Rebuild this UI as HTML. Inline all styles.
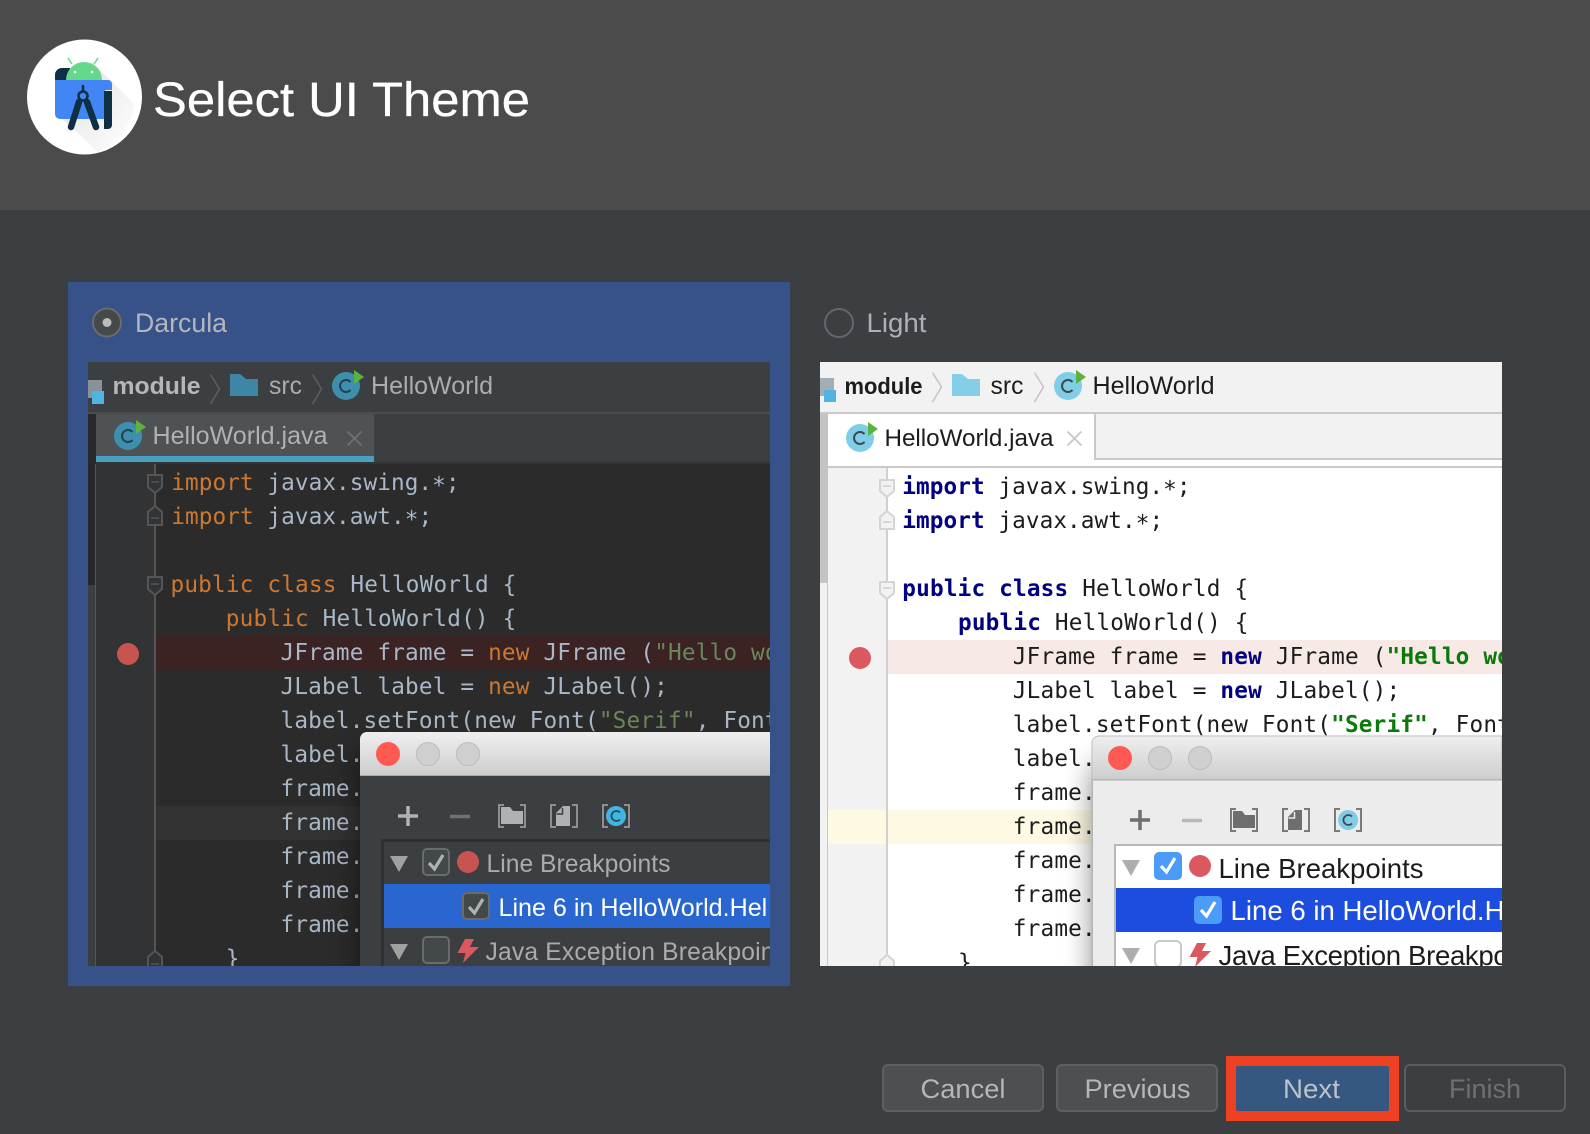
<!DOCTYPE html>
<html><head><meta charset="utf-8"><title>Select UI Theme</title>
<style>
html,body{margin:0;padding:0;background:#3c3f41}
svg{display:block}
text{white-space:pre;font-family:"Liberation Sans",sans-serif}
.m text{font-family:"DejaVu Sans Mono","Liberation Mono",monospace;font-size:22.7px;letter-spacing:.18px}
.m text.i{letter-spacing:.07px}
.dk{fill:#a9b7c6}.dk .k{fill:#cc7832}.dk .s{fill:#6a8759}
.lt{fill:#1c1c1c}.lt .k{fill:#000080;font-weight:bold}.lt .s{fill:#0a7a0a;font-weight:bold}
</style></head><body>
<svg xmlns="http://www.w3.org/2000/svg" width="1590" height="1134" viewBox="0 0 1590 1134">
<defs>
<clipPath id="cD"><rect x="88" y="362" width="682" height="604"/></clipPath>
<clipPath id="cL"><rect x="820" y="362" width="682" height="604"/></clipPath>
<linearGradient id="tb" x1="0" y1="0" x2="0" y2="1"><stop offset="0" stop-color="#efefef"/><stop offset="1" stop-color="#cdcdcd"/></linearGradient>
<filter id="sh" x="-30%" y="-30%" width="160%" height="160%"><feGaussianBlur stdDeviation="14"/></filter>
<linearGradient id="ls" x1="0" y1="0" x2="1" y2="1"><stop offset="0" stop-color="#000" stop-opacity=".13"/><stop offset="1" stop-color="#000" stop-opacity="0"/></linearGradient>
<g id="cd"><circle r="14" fill="#3e8fae"/><path d="M4.5-4A6 6 0 1 0 4.5 4" fill="none" stroke="#24404f" stroke-width="2"/><path d="M8-16L18-9 8-2z" fill="#5bb33e"/></g>
<g id="cl"><circle r="14" fill="#7fcde6"/><path d="M4.5-4A6 6 0 1 0 4.5 4" fill="none" stroke="#3b4a52" stroke-width="2"/><path d="M8-16L18-9 8-2z" fill="#5bb33e"/></g>
</defs>

<rect width="1590" height="1134" fill="#3c3f41"/>
<rect width="1590" height="210" fill="#4b4b4b"/>

<!-- logo -->
<circle cx="84.500" cy="97" r="57.500" fill="#fff"/>
<path d="M92 62L134 104A57.500 57.500 0 0 1 98 152L55 112z" fill="url(#ls)"/>
<path d="M62 68H70V84H55V75A7 7 0 0 1 62 68z" fill="#0f2f44"/>
<path d="M66 80A18 18 0 0 1 102 80z" fill="#64d98a"/>
<path d="M72 64L68 58M94 64L98 58" stroke="#64d98a" stroke-width="1.500"/>
<circle cx="75" cy="72" r="1.300" fill="#fff"/><circle cx="92" cy="72" r="1.300" fill="#fff"/>
<path d="M55 80H108A4 4 0 0 1 112 84V90H105V119H60A5 5 0 0 1 55 114z" fill="#4285f4"/>
<path d="M104 91H112V125A4 4 0 0 1 108 129H104z" fill="#0f2f44"/>
<path d="M83 85V91" stroke="#0f2f44" stroke-width="2.500"/>
<circle cx="83" cy="96" r="4.500" fill="none" stroke="#0f2f44" stroke-width="2.500"/>
<path d="M79 102L71 127M87 102L96 127" stroke="#0f2f44" stroke-width="6.500" stroke-linecap="round"/>

<text x="153" y="116" font-size="48" fill="#fff" stroke="#fff" stroke-width=".3" textLength="377" lengthAdjust="spacingAndGlyphs">Select UI Theme</text>

<!-- dark panel -->
<rect x="68" y="282" width="722" height="704" fill="#375288"/>
<circle cx="107" cy="322.500" r="14" fill="#45494a" stroke="#6b6b6b" stroke-width="2"/>
<circle cx="107" cy="322.500" r="4.500" fill="#bbb"/>
<text x="135" y="332" font-size="26.500" fill="#b4b6bb" textLength="92" lengthAdjust="spacingAndGlyphs">Darcula</text>

<g clip-path="url(#cD)">
<rect x="88" y="362" width="682" height="604" fill="#3c3f41"/>
<rect x="88" y="412" width="682" height="2" fill="#4a4c4e"/>
<rect x="88" y="414" width="8" height="171" fill="#26282a"/>
<rect x="95" y="464" width="1" height="502" fill="#555"/>
<rect x="96" y="414" width="278" height="42" fill="#4e5254"/>
<rect x="96" y="456" width="278" height="6" fill="#4a9fbf"/>
<rect x="96" y="462" width="674" height="2" fill="#323436"/>
<rect x="96" y="464" width="60" height="502" fill="#313335"/>
<rect x="156" y="464" width="614" height="502" fill="#2b2b2b"/>
<rect x="156" y="636" width="614" height="34" fill="#3b2223"/>
<rect x="156" y="806" width="614" height="34" fill="#323232"/>
<rect x="154" y="464" width="2" height="502" fill="#555"/>

<rect x="88" y="380" width="14" height="18" fill="#8a9299"/>
<rect x="92" y="391" width="12" height="13" fill="#4eb5e3"/>
<text x="112.500" y="394" font-size="24" font-weight="bold" fill="#b5b7b9" textLength="88" lengthAdjust="spacingAndGlyphs">module</text>
<path d="M210.500 374.500L219.500 389 210.500 404" fill="none" stroke="#5c5f61" stroke-width="1.500"/>
<path d="M230 374H240L246 379H258V396H230z" fill="#3e86a6"/>
<text x="269" y="394" font-size="24.700" fill="#aaacaf">src</text>
<path d="M312.500 374.500L321.500 389 312.500 404" fill="none" stroke="#5c5f61" stroke-width="1.500"/>
<use href="#cd" x="346" y="386"/>
<text x="371" y="394" font-size="24.700" fill="#aaacaf" textLength="122" lengthAdjust="spacingAndGlyphs">HelloWorld</text>

<use href="#cd" x="128" y="436"/>
<text x="152.500" y="444" font-size="25" fill="#afb1b3" textLength="175" lengthAdjust="spacingAndGlyphs">HelloWorld.java</text>
<path d="M347.500 431.500L361.500 445.500M361.500 431.500L347.500 445.500" stroke="#6e7072" stroke-width="1.800"/>

<g fill="#313335" stroke="#555" stroke-width="2">
<path d="M148 475H162V487L155 493 148 487z"/><path d="M148 525H162V512L155 506 148 512z"/>
<path d="M148 577H162V589L155 595 148 589z"/><path d="M148 968H162V957L155 951 148 957z"/>
</g>
<path d="M151 482H159M151 518H159M151 584H159M151 964H159" stroke="#555" stroke-width="1.500"/>
<circle cx="128" cy="654" r="11" fill="#c75450"/>

<g class="m dk">
<text class="i" x="171.300" y="490"><tspan class="k">import</tspan> javax.swing.<tspan dy="3">*</tspan><tspan dy="-3">;</tspan></text>
<text class="i" x="171.300" y="524"><tspan class="k">import</tspan> javax.awt.<tspan dy="3">*</tspan><tspan dy="-3">;</tspan></text>
<text x="170.500" y="592"><tspan class="k">public class</tspan> HelloWorld {</text>
<text x="225.800" y="626"><tspan class="k">public</tspan> HelloWorld() {</text>
<text x="280.500" y="660">JFrame frame = <tspan class="k">new</tspan> JFrame (<tspan class="s">"Hello wo</tspan></text>
<text x="280.500" y="694">JLabel label = <tspan class="k">new</tspan> JLabel();</text>
<text x="280.500" y="728">label.setFont(new Font(<tspan class="s">"Serif"</tspan>, Font</text>
<text x="280.500" y="762">label.</text>
<text x="280.500" y="796">frame.</text>
<text x="280.500" y="830">frame.</text>
<text x="280.500" y="864">frame.</text>
<text x="280.500" y="898">frame.</text>
<text x="280.500" y="932">frame.</text>
<text x="225.800" y="966">}</text>
</g>

<!-- dark dialog -->
<rect x="360" y="750" width="420" height="260" fill="#000" opacity=".5" filter="url(#sh)"/>
<path d="M360 775V739A7 7 0 0 1 367 732H770V775z" fill="url(#tb)"/>
<rect x="360" y="775" width="410" height="191" fill="#3c3f41"/>
<rect x="360" y="775" width="410" height="1" fill="#aaa"/>
<circle cx="388" cy="754" r="12" fill="#fe5a52"/>
<circle cx="428" cy="754" r="11.500" fill="#d0d0d0" stroke="#bcbcbc"/>
<circle cx="468" cy="754" r="11.500" fill="#d0d0d0" stroke="#bcbcbc"/>
<path d="M398 816H418M408 806V826" stroke="#afb1b3" stroke-width="3.500"/>
<path d="M450 816.500H470" stroke="#6e7072" stroke-width="3.500"/>
<path d="M504 805H499V827H504M520 805H525V827H520M556 805H551V827H556M572 805H577V827H572M608 805H603V827H608M624 805H629V827H624" fill="none" stroke="#8d8f91" stroke-width="2"/>
<path d="M501 807H510L513 811H523V824H501z" fill="#afb1b3"/>
<path d="M556 813L563 806H570V826H556z" fill="#afb1b3"/>
<path d="M556.500 814H562.500V808" fill="none" stroke="#3c3f41" stroke-width="1.500"/>
<circle cx="616" cy="816" r="10" fill="#40b6e0"/>
<path d="M620 812.500A5 5 0 1 0 620 819.500" fill="none" stroke="#24505f" stroke-width="1.800"/>

<path d="M382.500 966V840.500H770" fill="none" stroke="#2b2d2e" stroke-width="2.500"/>
<path d="M390 856H408L399 872z" fill="#a0a0a0"/>
<rect x="423" y="849" width="26" height="26" rx="4" fill="#43494a" stroke="#6b6b6b" stroke-width="2"/>
<path d="M429 863L434.500 869 443 855" fill="none" stroke="#afb1b3" stroke-width="3.200"/>
<circle cx="468" cy="862" r="11" fill="#c75450"/>
<text x="486.500" y="872" font-size="24.600" fill="#a9abad" textLength="184" lengthAdjust="spacingAndGlyphs">Line Breakpoints</text>
<rect x="384" y="884" width="386" height="44" fill="#2a66cf"/>
<rect x="463" y="893" width="26" height="26" rx="4" fill="#43494a" stroke="#6b6b6b" stroke-width="2"/>
<path d="M469 907L474.500 913 483 899" fill="none" stroke="#afb1b3" stroke-width="3.200"/>
<text x="498.500" y="916" font-size="25.100" fill="#fff">Line 6 in HelloWorld.Hel</text>
<path d="M390 944H408L399 960z" fill="#a0a0a0"/>
<rect x="423" y="937" width="26" height="26" rx="4" fill="#43494a" stroke="#6b6b6b" stroke-width="2"/>
<path d="M465 939H474L470 947H479L463 963 465.500 953H457.500z" fill="#db5860"/>
<text x="485.500" y="960" font-size="24.600" fill="#a9abad" letter-spacing=".2">Java Exception Breakpoints</text>
</g>

<!-- light panel -->
<circle cx="839" cy="323" r="14" fill="#3c3f41" stroke="#63666a" stroke-width="2"/>
<text x="866.500" y="332" font-size="26.500" fill="#adb0b4" textLength="60" lengthAdjust="spacingAndGlyphs">Light</text>

<g clip-path="url(#cL)">
<rect x="820" y="362" width="682" height="604" fill="#f2f2f2"/>
<rect x="820" y="412" width="682" height="2" fill="#c9c9c9"/>
<rect x="820" y="414" width="8" height="169" fill="#c4c4c4"/>
<rect x="827" y="583" width="1" height="383" fill="#c9c9c9"/>
<rect x="828" y="414" width="266" height="54" fill="#fff"/>
<rect x="1094" y="414" width="2" height="46" fill="#c9c9c9"/>
<rect x="1094" y="458" width="408" height="2" fill="#c9c9c9"/>
<rect x="1094" y="460" width="408" height="6" fill="#fff"/>
<rect x="828" y="466" width="674" height="2" fill="#c9c9c9"/>
<rect x="828" y="468" width="58" height="498" fill="#f2f2f2"/>
<rect x="886" y="468" width="616" height="498" fill="#fff"/>
<rect x="888" y="640" width="614" height="34" fill="#f7e9e5"/>
<rect x="828" y="810" width="674" height="34" fill="#fdf9e3"/>
<rect x="886" y="468" width="2" height="498" fill="#d0d0d0"/>

<rect x="820" y="378" width="14" height="18" fill="#a3adb5"/>
<rect x="824" y="390" width="12" height="12" fill="#4eb5e3"/>
<text x="844.500" y="394" font-size="23" font-weight="bold" fill="#1c1c1c" textLength="78" lengthAdjust="spacingAndGlyphs">module</text>
<path d="M932.500 372.500L941.500 387 932.500 402" fill="none" stroke="#c4c4c4" stroke-width="1.500"/>
<path d="M952 374H962L968 379H980V396H952z" fill="#85cee8"/>
<text x="990.500" y="394" font-size="24.700" fill="#1c1c1c">src</text>
<path d="M1034.500 372.500L1043.500 387 1034.500 402" fill="none" stroke="#c4c4c4" stroke-width="1.500"/>
<use href="#cl" x="1068" y="386"/>
<text x="1092.500" y="394" font-size="24.700" fill="#1c1c1c" textLength="122" lengthAdjust="spacingAndGlyphs">HelloWorld</text>

<use href="#cl" x="860" y="438"/>
<text x="884.500" y="446" font-size="24" fill="#1c1c1c" textLength="169" lengthAdjust="spacingAndGlyphs">HelloWorld.java</text>
<path d="M1067.500 431.500L1081.500 445.500M1081.500 431.500L1067.500 445.500" stroke="#c4c6c8" stroke-width="1.800"/>

<g fill="#f2f2f2" stroke="#d4d4d4" stroke-width="2">
<path d="M880 480H894V491L887 497 880 491z"/><path d="M880 529H894V517L887 511 880 517z"/>
<path d="M880 582H894V593L887 599 880 593z"/><path d="M880 968H894V961L887 955 880 961z"/>
</g>
<path d="M883 486H891M883 522H891M883 588H891" stroke="#d0d0d0" stroke-width="1.500"/>
<circle cx="860" cy="658" r="11" fill="#db5860"/>

<g class="m lt">
<text class="i" x="902.300" y="494"><tspan class="k">import</tspan> javax.swing.<tspan dy="3">*</tspan><tspan dy="-3">;</tspan></text>
<text class="i" x="902.300" y="528"><tspan class="k">import</tspan> javax.awt.<tspan dy="3">*</tspan><tspan dy="-3">;</tspan></text>
<text x="902.300" y="596"><tspan class="k">public class</tspan> HelloWorld {</text>
<text x="958" y="630"><tspan class="k">public</tspan> HelloWorld() {</text>
<text x="1012.800" y="664">JFrame frame = <tspan class="k">new</tspan> JFrame (<tspan class="s">"Hello wo</tspan></text>
<text x="1012.800" y="698">JLabel label = <tspan class="k">new</tspan> JLabel();</text>
<text x="1012.800" y="732">label.setFont(new Font(<tspan class="s">"Serif"</tspan>, Font</text>
<text x="1012.800" y="766">label.</text>
<text x="1012.800" y="800">frame.</text>
<text x="1012.800" y="834">frame.</text>
<text x="1012.800" y="868">frame.</text>
<text x="1012.800" y="902">frame.</text>
<text x="1012.800" y="936">frame.</text>
<text x="958" y="970">}</text>
</g>

<!-- light dialog -->
<rect x="1092" y="765" width="420" height="250" fill="#000" opacity=".45" filter="url(#sh)"/>
<path d="M1092 780V743A7 7 0 0 1 1099 736H1502V780z" fill="url(#tb)" stroke="#bdbdbd"/>
<rect x="1092" y="779" width="410" height="187" fill="#ececec"/>
<rect x="1092" y="779" width="410" height="1.500" fill="#b5b5b5"/>
<rect x="1091.500" y="779" width="1.500" height="187" fill="#b5b5b5"/>
<circle cx="1120" cy="758" r="12" fill="#fe5a52"/>
<circle cx="1160" cy="758" r="11.500" fill="#d0d0d0" stroke="#bcbcbc"/>
<circle cx="1200" cy="758" r="11.500" fill="#d0d0d0" stroke="#bcbcbc"/>
<path d="M1130 820H1150M1140 810V830" stroke="#6e6e6e" stroke-width="3.500"/>
<path d="M1182 820.500H1202" stroke="#b8b8b8" stroke-width="3.500"/>
<path d="M1236 809H1231V831H1236M1252 809H1257V831H1252M1288 809H1283V831H1288M1304 809H1309V831H1304M1340 809H1335V831H1340M1356 809H1361V831H1356" fill="none" stroke="#7a7a7a" stroke-width="2"/>
<path d="M1233 811H1242L1245 815H1255V828H1233z" fill="#6e6e6e"/>
<path d="M1288 817L1295 810H1302V830H1288z" fill="#6e6e6e"/>
<path d="M1288.500 818H1294.500V812" fill="none" stroke="#ececec" stroke-width="1.500"/>
<circle cx="1348" cy="820" r="10" fill="#7fcde6"/>
<path d="M1352 816.500A5 5 0 1 0 1352 823.500" fill="none" stroke="#3b4a52" stroke-width="1.800"/>

<rect x="1115" y="845" width="387" height="121" fill="#fff"/>
<path d="M1115 966V845H1502" fill="none" stroke="#b8b8b8" stroke-width="2"/>
<path d="M1122 860H1140L1131 876z" fill="#adadad"/>
<rect x="1154" y="852" width="28" height="28" rx="5" fill="#4a9bfa"/>
<path d="M1161 866L1166.500 872 1175 858" fill="none" stroke="#fff" stroke-width="3.200"/>
<circle cx="1200" cy="866" r="11" fill="#db5860"/>
<text x="1218.500" y="878" font-size="27.600" fill="#1c1c1c" textLength="205" lengthAdjust="spacingAndGlyphs">Line Breakpoints</text>
<rect x="1116" y="888" width="386" height="44" fill="#1c4ddf"/>
<rect x="1194" y="896" width="28" height="28" rx="5" fill="#4a9bfa"/>
<path d="M1201 910L1206.500 916 1215 902" fill="none" stroke="#fff" stroke-width="3.200"/>
<text x="1230.500" y="920" font-size="27.600" fill="#fff">Line 6 in HelloWorld.Hello</text>
<path d="M1122 948H1140L1131 964z" fill="#adadad"/>
<rect x="1155" y="941" width="26" height="26" rx="5" fill="#fff" stroke="#c9c9c9" stroke-width="2"/>
<path d="M1197 943H1206L1202 951H1211L1195 967 1197.500 957H1189.500z" fill="#db5860"/>
<text x="1218.500" y="965" font-size="27.600" fill="#1c1c1c" letter-spacing="-.35">Java Exception Breakpoints</text>
</g>

<!-- buttons -->
<rect x="883" y="1065" width="160" height="46" rx="5" fill="#4c5052" stroke="#5e6060" stroke-width="2"/>
<text x="920.500" y="1098" font-size="26.500" fill="#b4b6b8" textLength="85" lengthAdjust="spacingAndGlyphs">Cancel</text>
<rect x="1057" y="1065" width="160" height="46" rx="5" fill="#4c5052" stroke="#5e6060" stroke-width="2"/>
<text x="1084.500" y="1098" font-size="26.500" fill="#b4b6b8" textLength="106" lengthAdjust="spacingAndGlyphs">Previous</text>
<rect x="1226" y="1056" width="173" height="65" fill="#ee4023"/>
<rect x="1236" y="1066" width="153" height="45" rx="2" fill="#365880"/>
<text x="1283" y="1098" font-size="26.500" fill="#bcc2cb" textLength="57" lengthAdjust="spacingAndGlyphs">Next</text>
<rect x="1405" y="1065" width="160" height="46" rx="5" fill="#3c3f41" stroke="#5a5c5e" stroke-width="2"/>
<text x="1449" y="1098" font-size="26.500" fill="#6e7072" textLength="72" lengthAdjust="spacingAndGlyphs">Finish</text>
</svg>
</body></html>
